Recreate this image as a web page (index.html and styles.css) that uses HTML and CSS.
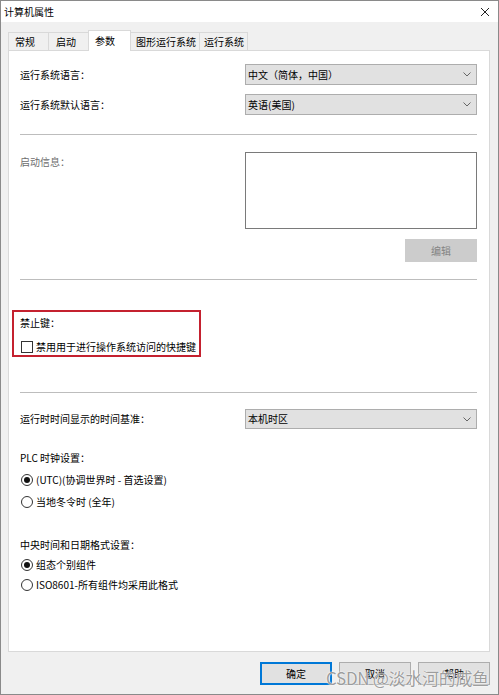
FILE: index.html
```html
<!DOCTYPE html>
<html lang="zh-CN">
<head>
<meta charset="utf-8">
<title>计算机属性</title>
<link rel="stylesheet" href="styles.css">
</head>
<body>
<div class="window">
  <div class="titlebar">
    <span class="title">计算机属性</span>
    <svg class="close" width="10" height="10" viewBox="0 0 10 10"><path d="M1 1 L9 9 M9 1 L1 9" stroke="#222" stroke-width="1" fill="none"/></svg>
  </div>
  <div class="tabs">
    <div class="tab t1">常规</div>
    <div class="tab t2">启动</div>
    <div class="tab t3 active">参数</div>
    <div class="tab t4">图形运行系统</div>
    <div class="tab t5">运行系统</div>
  </div>
  <div class="panel">
    <div class="field">
      <span class="label">运行系统语言：</span>
      <div class="select"><span>中文（简体，中国）</span><svg class="chev" width="8" height="5" viewBox="0 0 8 5"><path d="M0.5 0.5 L4 4 L7.5 0.5" stroke="#666" fill="none"/></svg></div>
    </div>
    <div class="field f2">
      <span class="label">运行系统默认语言：</span>
      <div class="select"><span>英语(美国)</span><svg class="chev" width="8" height="5" viewBox="0 0 8 5"><path d="M0.5 0.5 L4 4 L7.5 0.5" stroke="#666" fill="none"/></svg></div>
    </div>
    <div class="sep s1"></div>
    <div class="startup">
      <span class="label disabled">启动信息：</span>
      <div class="textarea"></div>
    </div>
    <div class="btn edit">编辑</div>
    <div class="sep s2"></div>
    <div class="redbox">
      <div class="line">禁止键：</div>
      <div class="check-row"><span class="checkbox"></span><span>禁用用于进行操作系统访问的快捷键</span></div>
    </div>
    <div class="sep s3"></div>
    <div class="field f3">
      <span class="label">运行时时间显示的时间基准：</span>
      <div class="select"><span>本机时区</span><svg class="chev" width="8" height="5" viewBox="0 0 8 5"><path d="M0.5 0.5 L4 4 L7.5 0.5" stroke="#666" fill="none"/></svg></div>
    </div>
    <div class="line plc">PLC 时钟设置：</div>
    <div class="radio-group g1">
      <div class="radio-row"><span class="radio checked"></span><span>(UTC)(协调世界时 - 首选设置)</span></div>
      <div class="radio-row"><span class="radio"></span><span>当地冬令时 (全年)</span></div>
    </div>
    <div class="line central">中央时间和日期格式设置：</div>
    <div class="radio-group g2">
      <div class="radio-row"><span class="radio checked"></span><span>组态个别组件</span></div>
      <div class="radio-row"><span class="radio"></span><span>ISO8601-所有组件均采用此格式</span></div>
    </div>
  </div>
  <div class="buttons">
    <div class="btn primary">确定</div>
    <div class="btn">取消</div>
    <div class="btn">帮助</div>
  </div>
  <div class="watermark">CSDN @淡水河的咸鱼</div>
</div>
</body>
</html>
```
FILE: styles.css
```css
html, body {
  margin: 0;
  padding: 0;
  background: #f0f0f0;
}
body {
  font-family: "Noto Sans CJK SC", "Microsoft YaHei", sans-serif;
  font-size: 10px;
  line-height: 14px;
  color: #000;
}
.window {
  position: relative;
  width: 499px;
  height: 695px;
  box-sizing: border-box;
  border: 1px solid #8a8a8a;
  background: #f0f0f0;
  overflow: hidden;
}
.titlebar {
  height: 21px;
  background: #ffffff;
  display: flex;
  align-items: center;
  justify-content: space-between;
  padding: 0 8px 0 3px;
}
.title {
  font-size: 10px;
}
.close {
  display: block;
}
.tabs {
  display: flex;
  align-items: flex-end;
  height: 20px;
  margin-top: 8px;
  padding-left: 7px;
}
.tab {
  box-sizing: border-box;
  height: 18px;
  border: 1px solid #d9d9d9;
  border-bottom: none;
  margin-left: -1px;
  background: #f0f0f0;
  display: flex;
  align-items: center;
  padding-left: 6px;
}
.tab:first-child {
  margin-left: 0;
}
.t1 { width: 41px; }
.t2 { width: 41px; padding-left: 7px; }
.t3 { width: 43px; }
.t4 { width: 70px; padding-left: 5px; }
.t5 { width: 49px; padding-left: 4px; }
.tab.active {
  position: relative;
  z-index: 2;
  height: 21px;
  margin-bottom: -1px;
  background: #ffffff;
  align-items: flex-start;
  padding-top: 3px;
}
.panel {
  position: relative;
  z-index: 1;
  box-sizing: border-box;
  height: 602px;
  margin: 0 8px 0 7px;
  background: #ffffff;
  border: 1px solid #d9d9d9;
  padding: 13px 12px 0 11px;
  display: flex;
  flex-direction: column;
}
.field {
  display: flex;
  align-items: center;
  justify-content: space-between;
  height: 21px;
}
.f2 { margin-top: 9px; }
.f3 { margin-top: 16px; height: 20px; }
.select {
  box-sizing: border-box;
  width: 232px;
  height: 100%;
  background: #e1e1e1;
  border: 1px solid #adadad;
  display: flex;
  align-items: center;
  justify-content: space-between;
  padding: 0 5px 0 2px;
}
.chev { display: block; }
.sep {
  height: 1px;
  background: #bdbdbd;
}
.s1 { margin-top: 19px; }
.s2 { margin-top: 17px; }
.s3 { margin-top: 35px; }
.startup {
  display: flex;
  justify-content: space-between;
  margin-top: 17px;
}
.startup .label {
  padding-top: 3px;
}
.disabled { color: #6d6d6d; }
.textarea {
  box-sizing: border-box;
  width: 232px;
  height: 77px;
  border: 1px solid #7a7a7a;
  background: #fff;
}
.btn {
  box-sizing: border-box;
  width: 72px;
  height: 23px;
  background: #e1e1e1;
  border: 1px solid #adadad;
  display: flex;
  align-items: center;
  justify-content: center;
}
.edit {
  align-self: flex-end;
  margin-top: 10px;
  background: #cccccc;
  border-color: #cccccc;
  color: #838383;
}
.redbox {
  box-sizing: border-box;
  margin-top: 30px;
  margin-left: -8px;
  width: 189px;
  height: 47px;
  border: 2px solid #c4212f;
  padding: 4px 0 0 6px;
}
.check-row {
  display: flex;
  align-items: center;
  margin-top: 10px;
  margin-left: 1px;
}
.checkbox {
  box-sizing: border-box;
  width: 12px;
  height: 12px;
  border: 1px solid #333;
  background: #fff;
  margin-right: 3px;
}
.plc { margin-top: 22px; }
.radio-group.g1 { margin-top: 4px; }
.g1 .radio-row { height: 22px; }
.central { margin-top: 25px; }
.radio-group.g2 { margin-top: 3px; }
.g2 .radio-row { height: 20px; }
.radio-row {
  display: flex;
  align-items: center;
  margin-left: 1px;
}
.radio {
  box-sizing: border-box;
  width: 12px;
  height: 12px;
  border: 1px solid #333;
  border-radius: 50%;
  margin-right: 3px;
  display: flex;
  align-items: center;
  justify-content: center;
  background: #fff;
}
.radio.checked::after {
  content: "";
  width: 6px;
  height: 6px;
  border-radius: 50%;
  background: #111;
}
.buttons {
  display: flex;
  justify-content: flex-end;
  gap: 7px;
  margin-top: 10px;
  padding-right: 8px;
}
.btn.primary {
  border: 2px solid #0078d7;
}
.watermark {
  position: absolute;
  left: 325px;
  top: 667px;
  font-size: 17px;
  line-height: 20px;
  color: rgba(125, 125, 125, 0.75);
  text-shadow: 0 0 2px #fff, 0 0 1px #fff;
  white-space: nowrap;
  letter-spacing: -0.3px;
}
```
